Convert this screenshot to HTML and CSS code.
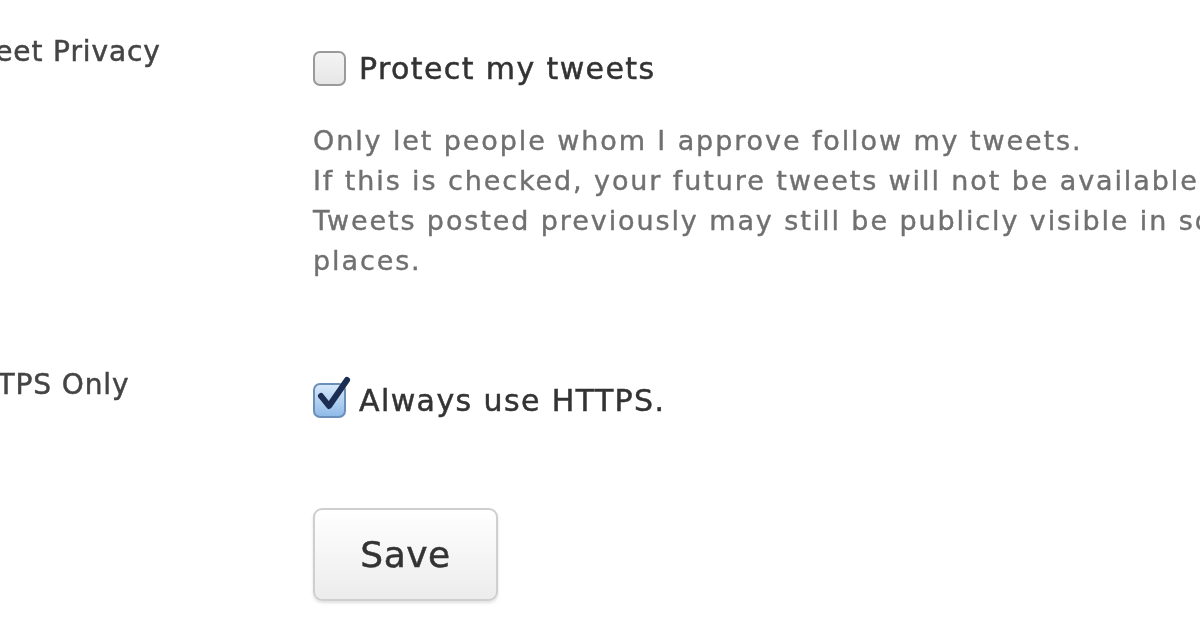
FILE: index.html
```html
<!DOCTYPE html>
<html>
<head>
<meta charset="utf-8">
<link rel="stylesheet" href="styles.css">
</head>
<body>
<div class="settings">
  <div class="row row-privacy">
    <div class="label">Tweet Privacy</div>
    <div class="field">
      <div class="check-line">
        <span class="box"></span>
        <span class="check-text">Protect my tweets</span>
      </div>
      <p class="desc">Only let people whom I approve follow my tweets.<br>If this is checked, your future tweets will not be available publicly.<br>Tweets posted previously may still be publicly visible in some<br>places.</p>
    </div>
  </div>
  <div class="row row-https">
    <div class="label">HTTPS Only</div>
    <div class="field">
      <div class="check-line">
        <span class="box checked"><svg class="tick" viewBox="0 0 40 40" width="40" height="40"><path d="M8 20 L16 30 L34 4" fill="none" stroke="#1b2d52" stroke-width="6" stroke-linecap="round" stroke-linejoin="round"/></svg></span>
        <span class="check-text">Always use HTTPS.</span>
      </div>
    </div>
  </div>
  <div class="row row-save">
    <div class="label"></div>
    <div class="field">
      <button class="save">Save</button>
    </div>
  </div>
</div>
</body>
</html>
```
FILE: styles.css
```css
html, body {
  margin: 0;
  padding: 0;
  background: #ffffff;
  overflow: hidden;
}
body {
  width: 1200px;
  height: 630px;
  font-family: "DejaVu Sans", "Liberation Sans", sans-serif;
}
.settings {
  margin-left: -42px;
  padding-top: 32px;
  filter: blur(0.5px);
}
.row {
  display: grid;
  grid-template-columns: 355px 1fr;
}
.label {
  font-size: 28px;
  line-height: 40px;
  letter-spacing: 0.9px;
  color: #444;
  -webkit-text-stroke: 0.5px #444;
  white-space: nowrap;
}
.row-privacy .field {
  padding-top: 16px;
}
.row-https {
  margin-top: 84px;
}
.row-https .field {
  padding-top: 15px;
}
.check-line {
  display: flex;
  align-items: center;
  height: 40px;
  gap: 13px;
}
.check-text {
  font-size: 30px;
  letter-spacing: 1.4px;
  color: #333;
  -webkit-text-stroke: 0.5px #333;
  white-space: nowrap;
}
.box {
  position: relative;
  width: 29px;
  height: 31px;
  border: 2px solid #9a9a9a;
  border-radius: 7px;
  background: linear-gradient(#f4f4f4, #e6e6e6);
  box-sizing: content-box;
  flex: none;
}
.box.checked {
  border-color: #6a8fb9;
  background: linear-gradient(#d6e8fa, #8fbbe8);
}
.tick {
  position: absolute;
  left: -2px;
  top: -9px;
}
.desc {
  margin: 33px 0 0 0;
  font-size: 27px;
  line-height: 40px;
  letter-spacing: 1.9px;
  color: #707070;
  -webkit-text-stroke: 0.4px #707070;
  white-space: nowrap;
}
.row-save {
  margin-top: 88px;
}
.save {
  width: 185px;
  height: 93px;
  border: 2px solid #cfcfcf;
  border-radius: 9px;
  background: linear-gradient(#ffffff, #ececec);
  box-shadow: 0 2px 3px rgba(0,0,0,0.12);
  font-family: "DejaVu Sans", "Liberation Sans", sans-serif;
  font-size: 36px;
  letter-spacing: 0.5px;
  color: #333;
  -webkit-text-stroke: 0.5px #333;
  padding: 0;
}
```
